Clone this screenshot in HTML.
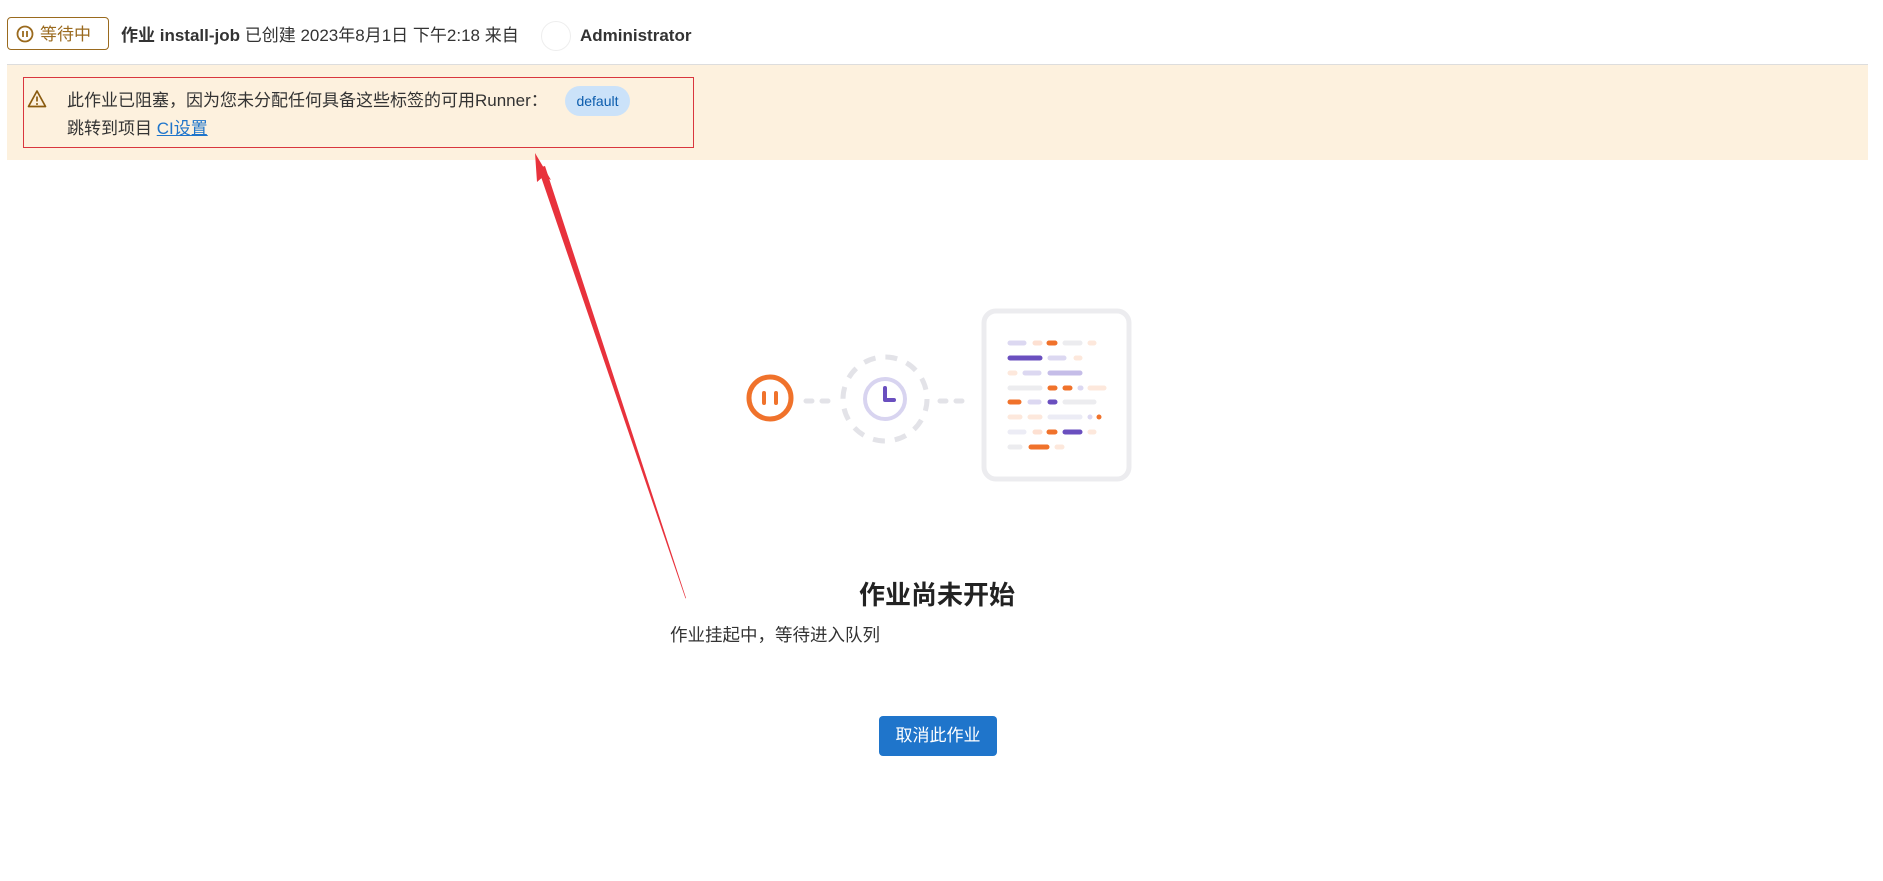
<!DOCTYPE html>
<html><head><meta charset="utf-8"><style>
body{margin:0;width:1883px;height:881px;background:#fff;font-family:"Liberation Sans","Noto Sans CJK SC",sans-serif;color:#333;position:relative;overflow:hidden}
.a{position:absolute;white-space:nowrap}
</style></head><body>
<div class="a" style="left:7px;top:17px;width:100px;height:31px;border:1px solid #9a6a1e;border-radius:4px;color:#9a6a1e;font-size:17px;line-height:33px">
<svg style="position:absolute;left:8px;top:7px" width="18" height="18"><circle cx="9" cy="9" r="7.5" fill="none" stroke="#9a6a1e" stroke-width="1.8"/><line x1="7" y1="6" x2="7" y2="12" stroke="#9a6a1e" stroke-width="1.8"/><line x1="11" y1="6" x2="11" y2="12" stroke="#9a6a1e" stroke-width="1.8"/></svg>
<span style="position:absolute;left:32px">等待中</span></div>
<div class="a" style="left:121px;top:24px;font-size:17px;line-height:24px;color:#333"><b>作业 install-job</b> 已创建 2023年8月1日 下午2:18 来自</div>
<div class="a" style="left:541px;top:21px;width:28px;height:28px;border:1px solid #eee;border-radius:50%"></div>
<div class="a" style="left:580px;top:24px;font-size:17px;line-height:24px;font-weight:bold;color:#333">Administrator</div>
<div class="a" style="left:7px;top:64px;width:1861px;height:1px;background:#ddd"></div>
<div class="a" style="left:7px;top:65px;width:1861px;height:95px;background:#fdf1de"></div>
<div class="a" style="left:23px;top:77px;width:669px;height:69px;border:1px solid #d9363e"></div>
<svg class="a" style="left:27px;top:89px" width="20" height="20"><path d="M10 2 L18.5 17.5 H1.5 Z" fill="none" stroke="#8a5b0f" stroke-width="1.7" stroke-linejoin="round"/><line x1="10" y1="7.5" x2="10" y2="12.5" stroke="#8a5b0f" stroke-width="1.7"/><circle cx="10" cy="15" r="1" fill="#8a5b0f"/></svg>
<div class="a" style="left:67px;top:89px;font-size:17px;line-height:24px;color:#333">此作业已阻塞，因为您未分配任何具备这些标签的可用Runner：</div>
<div class="a" style="left:565px;top:86px;width:65px;height:30px;border-radius:15px;background:#cbe2f9;color:#0b5cad;font-size:14px;line-height:30px;text-align:center">default</div>
<div class="a" style="left:67px;top:117px;font-size:17px;line-height:24px;color:#333">跳转到项目 <span style="color:#1f75cb;text-decoration:underline">CI设置</span></div>

<svg class="a" style="left:0;top:0" width="1883" height="881">
<circle cx="770" cy="398" r="21" fill="none" stroke="#f0722b" stroke-width="5"/>
<line x1="764" y1="393" x2="764" y2="403" stroke="#f0722b" stroke-width="4" stroke-linecap="round"/>
<line x1="776" y1="393" x2="776" y2="403" stroke="#f0722b" stroke-width="4" stroke-linecap="round"/>
<line x1="806" y1="401" x2="832" y2="401" stroke="#e3e3e8" stroke-width="5" stroke-linecap="round" stroke-dasharray="6 10"/>
<line x1="940" y1="401" x2="966" y2="401" stroke="#e3e3e8" stroke-width="5" stroke-linecap="round" stroke-dasharray="6 10"/>
<circle cx="885" cy="399" r="42" fill="none" stroke="#e3e3e8" stroke-width="5" stroke-dasharray="12 10"/>
<circle cx="885" cy="399" r="20" fill="none" stroke="#d8d4f0" stroke-width="4"/>
<path d="M885 388 V400 H894" fill="none" stroke="#6a4fbf" stroke-width="4" stroke-linecap="round" stroke-linejoin="round"/>
<rect x="984" y="311" width="145" height="168" rx="12" fill="#fff" stroke="#ececef" stroke-width="5"/>
<g stroke-width="5" stroke-linecap="round">
<line x1="1010" y1="343" x2="1024" y2="343" stroke="#dcd8f1"/><line x1="1035" y1="343" x2="1040" y2="343" stroke="#fde0d2"/><line x1="1049" y1="343" x2="1055" y2="343" stroke="#f0722b"/><line x1="1065" y1="343" x2="1080" y2="343" stroke="#ececef"/><line x1="1090" y1="343" x2="1094" y2="343" stroke="#fde8dc"/>
<line x1="1010" y1="358" x2="1040" y2="358" stroke="#6a4fbf"/><line x1="1050" y1="358" x2="1064" y2="358" stroke="#dcd8f1"/><line x1="1076" y1="358" x2="1080" y2="358" stroke="#fde8dc"/>
<line x1="1010" y1="373" x2="1015" y2="373" stroke="#fde8dc"/><line x1="1025" y1="373" x2="1039" y2="373" stroke="#dcd8f1"/><line x1="1050" y1="373" x2="1080" y2="373" stroke="#c5bde8"/>
<line x1="1010" y1="388" x2="1040" y2="388" stroke="#ececef"/><line x1="1050" y1="388" x2="1055" y2="388" stroke="#f0722b"/><line x1="1065" y1="388" x2="1070" y2="388" stroke="#f0722b"/><line x1="1080" y1="388" x2="1081" y2="388" stroke="#dcd8f1"/><line x1="1090" y1="388" x2="1104" y2="388" stroke="#fde8dc"/>
<line x1="1010" y1="402" x2="1019" y2="402" stroke="#f0722b"/><line x1="1030" y1="402" x2="1039" y2="402" stroke="#dcd8f1"/><line x1="1050" y1="402" x2="1055" y2="402" stroke="#6a4fbf"/><line x1="1065" y1="402" x2="1094" y2="402" stroke="#ececef"/>
<line x1="1010" y1="417" x2="1020" y2="417" stroke="#fde8dc"/><line x1="1030" y1="417" x2="1040" y2="417" stroke="#fde8dc"/><line x1="1050" y1="417" x2="1080" y2="417" stroke="#ececf5"/><line x1="1090" y1="417" x2="1090" y2="417" stroke="#dcd8f1"/><line x1="1099" y1="417" x2="1099" y2="417" stroke="#f0722b"/>
<line x1="1010" y1="432" x2="1024" y2="432" stroke="#ececf5"/><line x1="1035" y1="432" x2="1040" y2="432" stroke="#fde0d2"/><line x1="1049" y1="432" x2="1055" y2="432" stroke="#f0722b"/><line x1="1065" y1="432" x2="1080" y2="432" stroke="#6a4fbf"/><line x1="1090" y1="432" x2="1094" y2="432" stroke="#fde8dc"/>
<line x1="1010" y1="447" x2="1020" y2="447" stroke="#ececef"/><line x1="1031" y1="447" x2="1047" y2="447" stroke="#f0722b"/><line x1="1057" y1="447" x2="1062" y2="447" stroke="#fde8dc"/>
</g>
<path d="M686 598 L685.5 598.5 L538 168 L545 166 Z" fill="#e8323c"/>
<path d="M535 153 L551 180 L544 176 L537 182 Z" fill="#e8323c"/>
</svg>

<div class="a" style="left:859px;top:578px;font-size:26px;line-height:34px;font-weight:bold;color:#222">作业尚未开始</div>
<div class="a" style="left:670px;top:623px;font-size:17.5px;line-height:24px;color:#333">作业挂起中，等待进入队列</div>
<div class="a" style="left:879px;top:716px;width:118px;height:40px;background:#1f75cb;border-radius:4px;color:#fff;font-size:17px;line-height:40px;text-align:center">取消此作业</div>
</body></html>
